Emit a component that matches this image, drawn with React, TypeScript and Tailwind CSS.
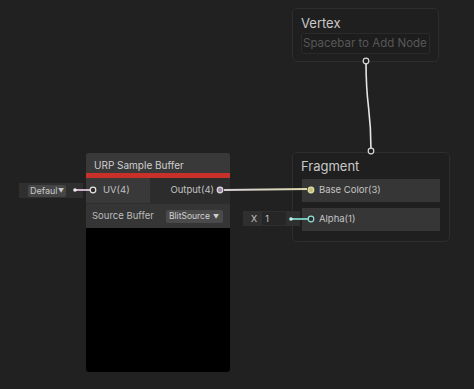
import React from "react";

const font = { fontFamily: "Inter, 'Noto Sans', sans-serif" };

function Wires() {
  return (
    <svg className="absolute left-0 top-0" width={474} height={389} viewBox="0 0 474 389" fill="none">
      {/* vertex -> fragment */}
      <path d="M366 62 C366 110 371 105 371 150" stroke="#e6e6e6" strokeWidth={1.6} />
      {/* output -> base color */}
      <defs>
        <linearGradient id="outWire" x1="220" y1="0" x2="311" y2="0" gradientUnits="userSpaceOnUse">
          <stop offset="0" stopColor="#d6d0dc" />
          <stop offset="1" stopColor="#dcd9a8" />
        </linearGradient>
      </defs>
      <path d="M224 190 L307 189" stroke="url(#outWire)" strokeWidth={1.8} />
      {/* default -> uv */}
      <path d="M75 190 L90 190" stroke="#e4c4e0" strokeWidth={1.8} />
      {/* x1 -> alpha */}
      <path d="M291 219 L308 219" stroke="#7fd6cc" strokeWidth={1.8} />
      {/* port circles */}
      <circle cx={366} cy={61} r={2.8} fill="#1f1f1f" stroke="#d8d8d8" strokeWidth={1.2} />
      <circle cx={371} cy={151} r={2.8} fill="#1f1f1f" stroke="#d8d8d8" strokeWidth={1.2} />
      <circle cx={93} cy={190} r={2.8} fill="#2e2e2e" stroke="#e6e6e6" strokeWidth={1.2} />
      <circle cx={220} cy={190} r={2.8} fill="#9a8aa0" stroke="#e0d8e6" strokeWidth={1.2} />
      <circle cx={311} cy={190} r={2.8} fill="#c2c27a" stroke="#e0e0a8" strokeWidth={1.2} />
      <circle cx={311} cy={219} r={2.8} fill="#2e2e2e" stroke="#8fe0d6" strokeWidth={1.2} />
      <circle cx={75} cy={190} r={1.8} fill="#eeeeee" />
      <circle cx={291} cy={219} r={1.8} fill="#bff0ea" />
    </svg>
  );
}

export default function App() {
  return (
    <div className="relative h-[389px] w-[474px] overflow-hidden bg-[#212121]" style={font}>
      {/* Vertex */}
      <div className="absolute left-[292px] top-[8px] flex h-[54px] w-[147px] flex-col rounded-[5px] border border-[#2e2e2e] bg-[#1f1f1f] px-[8px] pt-[5px]">
        <div className="text-[13px] leading-[18px] text-[#c9c9c9]">Vertex</div>
        <div className="mt-[1px] flex h-[21px] items-center overflow-hidden whitespace-nowrap rounded-[2px] border border-[#2a2a2a] bg-[#1d1d1d] px-[1px] text-[11.5px] text-[#575757]">
          Spacebar to Add Node
        </div>
      </div>

      {/* Fragment */}
      <div className="absolute left-[292px] top-[152px] flex h-[90px] w-[158px] flex-col rounded-[5px] border border-[#2e2e2e] bg-[#1f1f1f] pt-[4px]">
        <div className="px-[8px] text-[13px] leading-[18px] text-[#c9c9c9]">Fragment</div>
        <div className="ml-[9px] mt-[4px] flex h-[23px] w-[138px] items-center bg-[#363636] pl-[17px] text-[9.5px] text-[#c4c4c4]">
          Base Color(3)
        </div>
        <div className="ml-[9px] mt-[6px] flex h-[23px] w-[138px] items-center bg-[#363636] pl-[17px] text-[9.5px] text-[#c4c4c4]">
          Alpha(1)
        </div>
      </div>

      {/* URP Sample Buffer */}
      <div className="absolute left-[86px] top-[153px] flex h-[219px] w-[144px] flex-col overflow-hidden rounded-[3px] bg-[#2a2a2a]">
        <div className="flex h-[20px] items-end bg-[#393939] px-[8px] pb-[2px] text-[10px] leading-[12px] text-[#cfcfcf]">
          URP Sample Buffer
        </div>
        <div className="h-[5px] bg-[#c8302a]" />
        <div className="flex h-[25px] text-[9.5px] text-[#c2c2c2]">
          <div className="flex w-[64px] items-center bg-[#393939] pl-[17px]">UV(4)</div>
          <div className="flex flex-1 items-center justify-end bg-[#2c2c2c] pr-[16px]">Output(4)</div>
        </div>
        <div className="flex h-[25px] items-center justify-between border-t border-[#2e2e2e] bg-[#353535] pl-[6px] pr-[7px] text-[9.5px] text-[#bdbdbd]">
          <span>Source Buffer</span>
          <div className="flex h-[13px] w-[57px] items-center justify-between rounded-[2px] bg-[#4a4a4a] pl-[3px] pr-[4px] text-[8.5px] text-[#d0d0d0]">
            <span>BlitSource</span>
            <span className="text-[6px]">▼</span>
          </div>
        </div>
        <div className="flex-1 bg-black" />
      </div>

      {/* Default input */}
      <div className="absolute left-[19px] top-[183px] flex h-[15px] w-[64px] items-center bg-[#2f2f2f] pl-[9px]">
        <div className="flex h-[12px] w-[38px] items-center justify-between overflow-hidden rounded-[2px] bg-[#454545] px-[2px] text-[9px] text-[#c8c8c8]">
          <span className="whitespace-nowrap">Defaul</span>
          <span className="text-[6px]">▼</span>
        </div>
      </div>

      {/* X 1 input */}
      <div className="absolute left-[243px] top-[211px] flex h-[15px] w-[57px] items-center bg-[#2f2f2f] pl-[8px] text-[9px] text-[#c8c8c8]">
        <span>X</span>
        <div className="ml-[5px] flex h-[13px] w-[24px] items-center bg-[#262626] pl-[3px]">1</div>
      </div>

      <Wires />
    </div>
  );
}
